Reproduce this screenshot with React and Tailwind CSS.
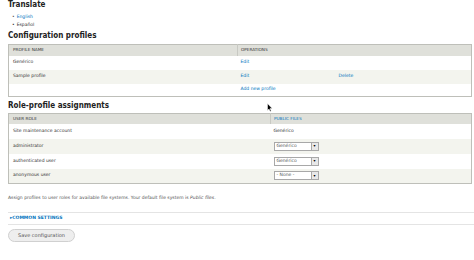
import React from 'react';

const font = { fontFamily: '"DejaVu Sans", Verdana, sans-serif' };

function Select({ value }) {
  return (
    <div className="flex h-[9px] w-[45px] items-center justify-between border border-[#a8a8a8] bg-white pl-[2px] text-[4.5px] text-[#555]">
      <span>{value}</span>
      <span className="flex h-full w-[7px] items-center justify-center border-l border-[#a8a8a8] bg-[#e8e8e8] text-[4px] leading-none text-black">▾</span>
    </div>
  );
}

export default function App() {
  return (
    <div className="relative h-[260px] w-[474px] overflow-hidden bg-white text-[#333]" style={font}>
      <div className="pl-[8px] pr-[2px]">
        <h2 className="-mt-[1px] text-[8px] font-bold leading-[12px] text-[#222] font-stretch-condensed">Translate</h2>
        <ul className="mt-[2px] pl-[4px] text-[4.5px] leading-[7.5px]">
          <li className="flex items-center gap-[2px]"><span className="text-[#555]">•</span><a className="text-[#0074bd]">English</a></li>
          <li className="flex items-center gap-[2px]"><span>•</span><span>Español</span></li>
        </ul>
        <h2 className="mt-[2px] text-[8px] font-bold leading-[12px] text-[#222] font-stretch-condensed">Configuration profiles</h2>

        <table className="mt-[2px] w-full border-collapse border border-[#bebfb9] text-left text-[4.5px]">
          <thead>
            <tr className="h-[11px] bg-[#dfe0da] text-[4.2px] uppercase text-[#333]">
              <th className="w-[229px] border-r border-[#c8c9c3] pl-[4px] font-normal">Profile name</th>
              <th className="pl-[3px] font-normal" colSpan={2}>Operations</th>
            </tr>
          </thead>
          <tbody>
            <tr className="h-[14px] bg-white">
              <td className="pl-[4px]">Genérico</td>
              <td className="w-[101px] pl-[3px] text-[#0074bd]">Edit</td>
              <td></td>
            </tr>
            <tr className="h-[14px] bg-[#f3f4ee]">
              <td className="pl-[4px]">Sample profile</td>
              <td className="pl-[3px] text-[#0074bd]">Edit</td>
              <td className="text-[#0074bd]">Delete</td>
            </tr>
            <tr className="h-[13px] border-b border-[#bebfb9] bg-white">
              <td></td>
              <td className="pl-[3px] text-[#0074bd]" colSpan={2}>Add new profile</td>
            </tr>
          </tbody>
        </table>

        <h2 className="mt-[3px] text-[8px] font-bold leading-[12px] text-[#222] font-stretch-condensed">Role-profile assignments</h2>

        <table className="mt-[1px] w-full border-collapse border border-[#bebfb9] text-left text-[4.5px]">
          <thead>
            <tr className="h-[10px] bg-[#dfe0da] text-[4.2px] uppercase">
              <th className="w-[262px] border-r border-[#c8c9c3] pl-[4px] font-normal">User role</th>
              <th className="pl-[3px] font-normal text-[#0074bd]">Public files</th>
            </tr>
          </thead>
          <tbody>
            <tr className="h-[15px] bg-white">
              <td className="pl-[4px]">Site maintenance account</td>
              <td className="pl-[3px]">Genérico</td>
            </tr>
            <tr className="h-[15px] bg-[#f3f4ee]">
              <td className="pl-[4px]">administrator</td>
              <td className="pl-[3px]"><Select value="Genérico" /></td>
            </tr>
            <tr className="h-[15px] bg-white">
              <td className="pl-[4px]">authenticated user</td>
              <td className="pl-[3px]"><Select value="Genérico" /></td>
            </tr>
            <tr className="h-[15px] bg-[#f3f4ee]">
              <td className="pl-[4px]">anonymous user</td>
              <td className="pl-[3px]"><Select value="- None -" /></td>
            </tr>
          </tbody>
        </table>

        <p className="mt-[11px] text-[4.5px] text-[#555]">
          Assign profiles to user roles for available file systems. Your default file system is <em>Public files</em>.
        </p>

        <div className="mt-[10px] -mr-[2px] flex h-[13px] items-center border-y border-[#e4e4e4] pl-[2px]">
          <span className="text-[4.5px] font-bold uppercase text-[#0074bd]">▸Common settings</span>
        </div>

        <button className="mt-[4px] block h-[13px] w-[67px] rounded-full border border-[#d0d0d0] bg-[#eeeeee] text-[5px] text-[#555]">
          Save configuration
        </button>
      </div>

      <svg className="absolute left-[267px] top-[103px]" width="6" height="9" viewBox="0 0 6 9">
        <path d="M0.5 0.5 L0.5 7.5 L2 6 L3.2 8.6 L4.2 8.1 L3 5.6 L5.2 5.6 Z" fill="#000" stroke="#fff" strokeWidth="0.5" />
      </svg>
    </div>
  );
}
